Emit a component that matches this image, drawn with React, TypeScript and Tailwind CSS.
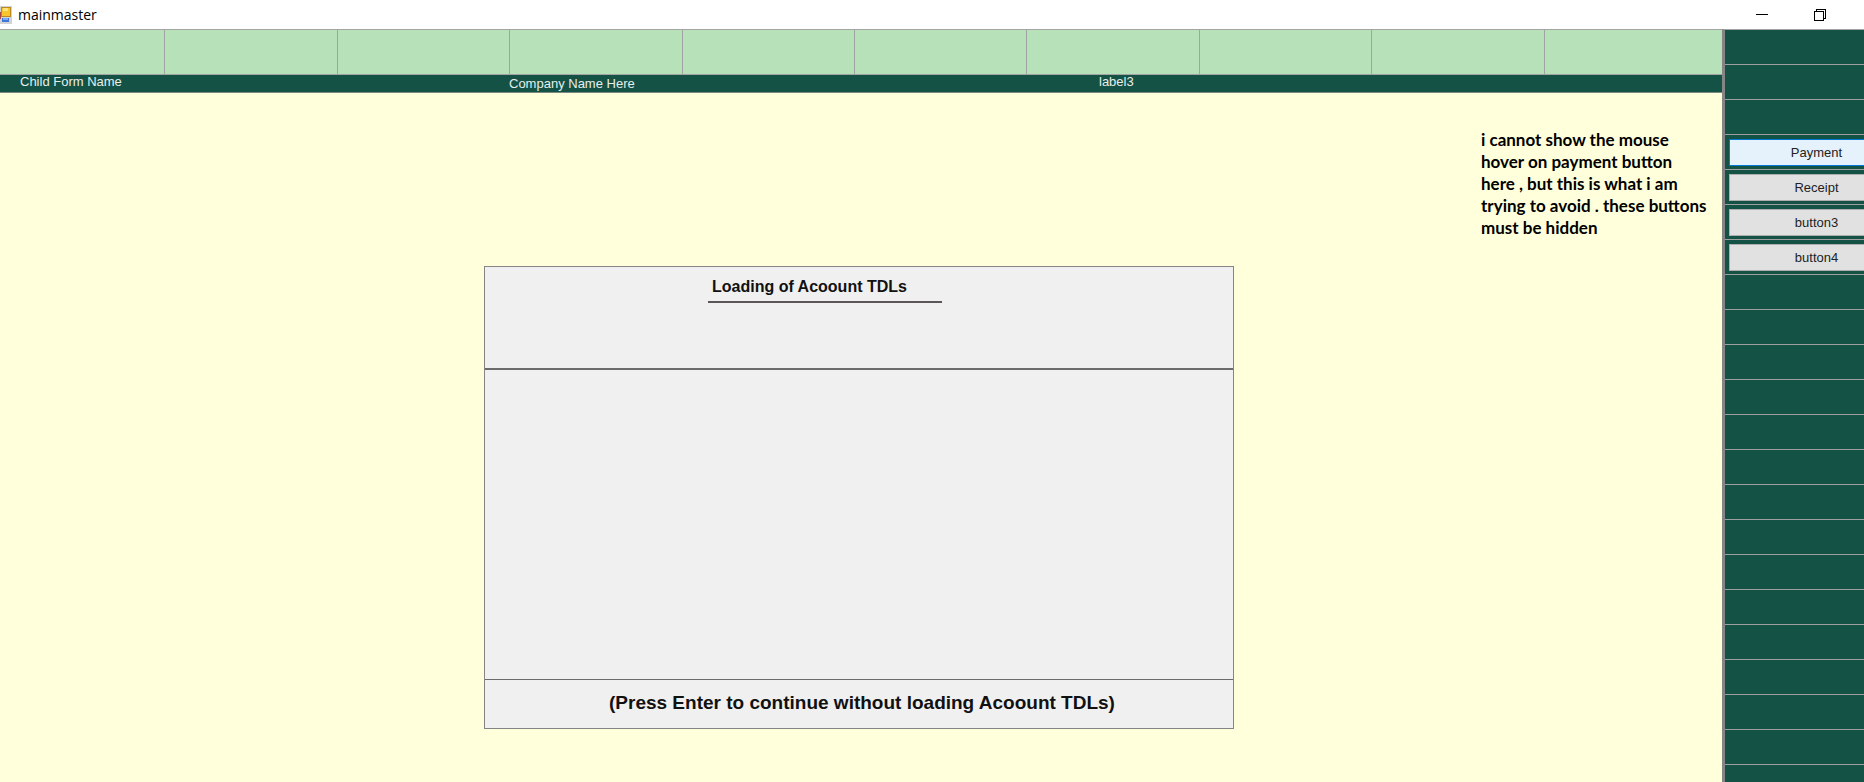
const toolbarCells = Array.from({ length: 10 }, (_, i) => i);

const sideRows: (string | null)[] = [
  null, null, null,
  'Payment', 'Receipt', 'button3', 'button4',
  null, null, null, null, null, null, null, null,
  null, null, null, null, null, null, null,
];

const FormIcon = () => (
  <svg width="12" height="18" viewBox="0 0 12 18" aria-hidden="true">
    <rect width="12" height="18" fill="#d3d3d6" />
    <rect y="6" width="1" height="7" fill="#a8464c" />
    <rect x="1" y="1" width="10" height="10" fill="#b98a1c" />
    <rect x="2" y="2" width="8" height="8" fill="#f8c62c" />
    <rect x="3" y="2" width="5" height="3" fill="#fde184" />
    <rect x="2" y="12" width="7" height="4" fill="#3f77d8" />
    <rect x="3" y="12" width="5" height="2" fill="#7fa9f0" />
  </svg>
);

const TitleBar = () => (
  <header className="flex h-[29px] shrink-0 items-center bg-white">
    <FormIcon />
    <h1 className="ml-1.5 flex-1 font-['Open_Sans',sans-serif] text-[14px] leading-5 text-black">mainmaster</h1>
    <button type="button" aria-label="Minimize" className="flex h-full w-[58px] items-center justify-center">
      <svg width="12" height="12" viewBox="0 0 12 12" shapeRendering="crispEdges">
        <rect y="5" width="12" height="1" fill="#000" />
      </svg>
    </button>
    <button type="button" aria-label="Restore" className="mr-[15px] flex h-7 w-[58px] items-center justify-center">
      <svg width="12" height="12" viewBox="0 0 12 12">
        <path
          d="M0 2h10v10H0zM1 3v8h8V3zM2 0h10v10h-2V9h1V1H3v1H2z"
          fill="#000"
          fillRule="evenodd"
          shapeRendering="crispEdges"
        />
      </svg>
    </button>
  </header>
);

const Toolbar = () => (
  <div className="grid h-[46px] shrink-0 grid-cols-[165fr_repeat(8,172fr)_177fr] border-y border-[#a3a3a3] bg-[#b7e1b9]">
    {toolbarCells.map((cell) => (
      <div key={cell} className="border-r border-[#a3a3a3] last:border-r-0"></div>
    ))}
  </div>
);

const StatusBar = () => (
  <div className="grid h-[18px] shrink-0 grid-cols-[509fr_590fr_623fr] border-b border-[#7b8a80] bg-[#145246] text-[13px] text-[#e6efec]">
    <span className="self-start pl-5 leading-[14px]">Child Form Name</span>
    <span className="self-end leading-4">Company Name Here</span>
    <span className="self-start leading-[14px]">label3</span>
  </div>
);

const LoadingPanel = () => (
  <section className="flex h-[463px] w-[750px] flex-col border border-[#858585] bg-[#f0f0f0] font-bold text-[#111]">
    <div className="flex h-[103px] justify-center border-b-2 border-[#6b6b6b] pr-[68px]">
      <h2 className="mt-2 h-7 w-[234px] border-b-2 border-[#5c5658] pl-1 text-[16px] leading-6">
        Loading of Acoount TDLs
      </h2>
    </div>
    <div className="flex-1"></div>
    <p className="h-[49px] border-t border-[#6b6b6b] pl-[124px] text-[19px] leading-[46px]">
      (Press Enter to continue without loading Acoount TDLs)
    </p>
  </section>
);

const SideBar = () => (
  <aside className="w-[142px] shrink-0 overflow-hidden border-t border-l-3 border-t-[#a3a3a3] border-l-[#858585] bg-[#145246]">
    {sideRows.map((label, i) => (
      <div key={i} className="flex h-[35px] w-[183px] items-center border-b border-[#a09f9f] px-1">
        {label && (
          <button
            type="button"
            className={`h-[27px] w-full border pt-px text-[13px] leading-4 text-[#222] ${
              label === 'Payment' ? 'border-[#0078d7] bg-[#e5f1fb]' : 'border-[#adadad] bg-[#e1e1e1]'
            }`}
          >
            {label}
          </button>
        )}
      </div>
    ))}
  </aside>
);

export default function App() {
  return (
    <div className="flex h-screen flex-col overflow-hidden bg-[#ffffdb] font-['Liberation_Sans',sans-serif]">
      <TitleBar />
      <div className="flex min-h-0 flex-1">
        <div className="flex min-w-0 flex-1 flex-col">
          <Toolbar />
          <StatusBar />
          <main className="relative flex flex-1 justify-center pt-[173px] pr-1">
            <LoadingPanel />
            <p className="absolute top-9 right-3 w-[229px] font-['Lato',sans-serif] text-[17px] leading-[22px] font-bold whitespace-nowrap text-black">
              i cannot show the mouse
              <br />
              hover on payment button
              <br />
              here , but this is what i am
              <br />
              trying to avoid . these buttons
              <br />
              must be hidden
            </p>
          </main>
        </div>
        <SideBar />
      </div>
    </div>
  );
}
